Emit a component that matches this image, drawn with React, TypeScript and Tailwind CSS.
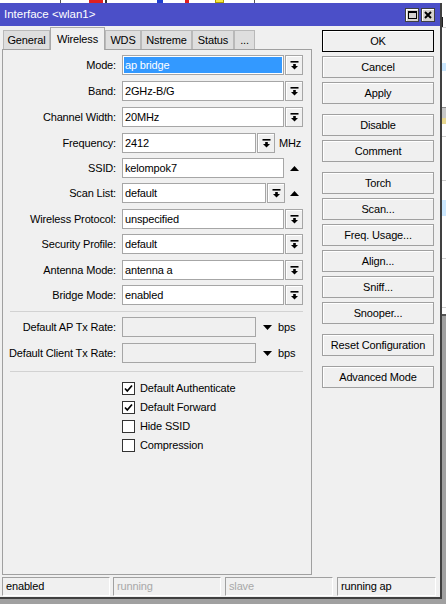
import type { ReactNode } from "react";

function DropGlyph() {
  return (
    <svg width="9" height="9" viewBox="0 0 9 9">
      <rect x="0.5" y="0" width="8" height="1.6" fill="#000" />
      <rect x="3.2" y="3" width="2.6" height="2" fill="#000" />
      <path d="M1 5 H8 L4.5 8.6 Z" fill="#000" />
    </svg>
  );
}

function DropButton() {
  return (
    <div className="ml-[1px] flex h-[20px] w-[18px] items-center justify-center border border-[#a6a6a6] bg-[#f0f0f0] shadow-[inset_1px_1px_0_#ffffff]">
      <DropGlyph />
    </div>
  );
}

function UpArrow({ className }: { className: string }) {
  return (
    <svg className={className} width="9" height="5" viewBox="0 0 9 5">
      <path d="M0 5 L4.5 0 L9 5 Z" fill="#000" />
    </svg>
  );
}

function DownArrow({ className }: { className: string }) {
  return (
    <svg className={className} width="9" height="5" viewBox="0 0 9 5">
      <path d="M0 0 L9 0 L4.5 5 Z" fill="#000" />
    </svg>
  );
}

function Field({
  width,
  value,
  selected,
  disabled,
}: {
  width: string;
  value?: string;
  selected?: boolean;
  disabled?: boolean;
}) {
  return (
    <div
      className={`${width} h-[20px] border border-[#a6a6a6] p-[1px] ${
        disabled ? "bg-[#f0f0f0]" : "bg-white"
      }`}
    >
      <div
        className={`h-full px-[1px] leading-[16px] ${
          selected ? "bg-[#3399ff] text-white" : "text-black"
        }`}
      >
        {value}
      </div>
    </div>
  );
}

function Row({
  label,
  className,
  children,
}: {
  label: string;
  className: string;
  children: ReactNode;
}) {
  return (
    <div className={`flex h-[20px] items-center ${className}`}>
      <div className="w-[113px] text-right">{label}:</div>
      <div className="ml-[6px] flex h-full items-center">{children}</div>
    </div>
  );
}

function Check({ label, checked }: { label: string; checked?: boolean }) {
  return (
    <div className="flex h-[19px] items-center pl-[119px]">
      <div className="flex h-[13px] w-[13px] items-center justify-center border border-[#333333] bg-white">
        {checked && (
          <svg width="11" height="11" viewBox="0 0 11 11">
            <path d="M2 5.5 L4.3 8 L9 2.5" fill="none" stroke="#000" strokeWidth="1.7" />
          </svg>
        )}
      </div>
      <span className="ml-[5px]">{label}</span>
    </div>
  );
}

function Btn({ label, className, primary }: { label: string; className: string; primary?: boolean }) {
  return (
    <div
      className={`flex h-[22px] w-[112px] items-center justify-center border bg-[#f0f0f0] shadow-[inset_1px_1px_0_#ffffff] ${
        primary ? "border-[#000000]" : "border-[#a0a0a0]"
      } ${className}`}
    >
      {label}
    </div>
  );
}

function Tab({ label, width, active }: { label: string; width: string; active?: boolean }) {
  return active ? (
    <div
      className={`relative -mb-px flex h-[23px] ${width} items-start justify-center border border-b-0 border-[#a9a9a9] bg-[#f0f0f0] pt-[3px]`}
    >
      {label}
    </div>
  ) : (
    <div
      className={`flex h-[19px] ${width} items-center justify-center border border-b-0 border-[#b9b9b9] bg-[#dedede]`}
    >
      {label}
    </div>
  );
}

function Status({ text, width, dim, className }: { text: string; width: string; dim?: boolean; className: string }) {
  return (
    <div
      className={`h-[19px] ${width} border border-t-[#a0a0a0] border-l-[#a0a0a0] border-r-white border-b-white pl-[3px] leading-[17px] ${
        dim ? "text-[#a8a8a8]" : "text-black"
      } ${className}`}
    >
      {text}
    </div>
  );
}

export default function App() {
  return (
    <div className="flex h-[604px] w-[446px] flex-col overflow-hidden bg-white font-['Liberation_Sans',Arial,sans-serif] text-[11px] tracking-[-0.15px] text-black">
      {/* sliver of the window behind */}
      <div className="flex h-[3px] items-start">
        <div className="ml-[60px] h-[3px] w-[1px] bg-[#555]" />
        <div className="ml-[28px] h-[3px] w-[14px] bg-[#e02020]" />
        <div className="ml-[2px] h-[3px] w-[2px] bg-[#333]" />
        <div className="ml-[50px] h-[3px] w-[6px] bg-[#2040d0]" />
        <div className="ml-[22px] h-[3px] w-[4px] bg-[#e02020]" />
        <div className="ml-[26px] h-[3px] w-[9px] border border-t-0 border-[#b0a000] bg-[#f5e642]" />
        <div className="ml-[30px] h-[3px] w-[1px] bg-[#555]" />
      </div>

      <div className="flex h-[596px]">
        {/* dialog window */}
        <div className="flex w-[442px] flex-col border-r-2 border-b-2 border-[#404040] bg-[#f0f0f0] pb-[1px]">
          {/* title bar */}
          <div className="flex h-[23px] items-center bg-[#4b4fc8] pl-[4px] pr-[5px]">
            <span className="text-[11.5px] tracking-normal text-white">Interface &lt;wlan1&gt;</span>
            <div className="ml-auto flex gap-[2px]">
              <div className="flex h-[14px] w-[14px] items-center justify-center border border-[#404040] bg-[#d6d3ce] shadow-[inset_1px_1px_0_#ffffff]">
                <div className="h-[8px] w-[9px] border border-t-2 border-black" />
              </div>
              <div className="flex h-[14px] w-[14px] items-center justify-center border border-[#404040] bg-[#d6d3ce] shadow-[inset_1px_1px_0_#ffffff]">
                <svg width="8" height="8" viewBox="0 0 8 8">
                  <path d="M1 1 L7 7 M7 1 L1 7" stroke="#000" strokeWidth="2" />
                </svg>
              </div>
            </div>
          </div>

          {/* body */}
          <div className="flex h-[549px]">
            <div className="flex flex-col pl-[2px]">
              <div className="ml-[1px] mt-[1px] flex h-[22px] items-end">
                <Tab label="General" width="w-[47px]" />
                <Tab label="Wireless" width="w-[55px]" active />
                <Tab label="WDS" width="w-[36px]" />
                <Tab label="Nstreme" width="w-[51px]" />
                <Tab label="Status" width="w-[42px]" />
                <Tab label="..." width="w-[21px]" />
              </div>

              <div className="flex h-[526px] w-[310px] flex-col border border-[#a0a0a0] pt-[5px]">
                <Row label="Mode" className="">
                  <Field width="w-[162px]" value="ap bridge" selected />
                  <DropButton />
                </Row>
                <Row label="Band" className="mt-[6px]">
                  <Field width="w-[162px]" value="2GHz-B/G" />
                  <DropButton />
                </Row>
                <Row label="Channel Width" className="mt-[6px]">
                  <Field width="w-[162px]" value="20MHz" />
                  <DropButton />
                </Row>
                <Row label="Frequency" className="mt-[6px]">
                  <Field width="w-[134px]" value="2412" />
                  <DropButton />
                  <span className="ml-[4px]">MHz</span>
                </Row>
                <Row label="SSID" className="mt-[5px]">
                  <Field width="w-[162px]" value="kelompok7" />
                  <UpArrow className="ml-[6px]" />
                </Row>
                <Row label="Scan List" className="mt-[5px]">
                  <Field width="w-[144px]" value="default" />
                  <DropButton />
                  <UpArrow className="ml-[5px]" />
                </Row>
                <Row label="Wireless Protocol" className="mt-[6px]">
                  <Field width="w-[162px]" value="unspecified" />
                  <DropButton />
                </Row>
                <Row label="Security Profile" className="mt-[5px]">
                  <Field width="w-[162px]" value="default" />
                  <DropButton />
                </Row>
                <Row label="Antenna Mode" className="mt-[6px]">
                  <Field width="w-[162px]" value="antenna a" />
                  <DropButton />
                </Row>
                <Row label="Bridge Mode" className="mt-[5px]">
                  <Field width="w-[162px]" value="enabled" />
                  <DropButton />
                </Row>

                <div className="ml-[7px] mt-[6px] w-[293px] border-t border-[#d2d2d2]" />

                <Row label="Default AP Tx Rate" className="mt-[5px]">
                  <Field width="w-[134px]" disabled />
                  <DownArrow className="ml-[7px]" />
                  <span className="ml-[6px]">bps</span>
                </Row>
                <Row label="Default Client Tx Rate" className="mt-[6px]">
                  <Field width="w-[134px]" disabled />
                  <DownArrow className="ml-[7px]" />
                  <span className="ml-[6px]">bps</span>
                </Row>

                <div className="ml-[7px] mt-[8px] w-[293px] border-t border-[#d2d2d2]" />

                <div className="mt-[7px] flex flex-col">
                  <Check label="Default Authenticate" checked />
                  <Check label="Default Forward" checked />
                  <Check label="Hide SSID" />
                  <Check label="Compression" />
                </div>
              </div>
            </div>

            <div className="ml-[10px] flex flex-col pt-[4px]">
              <Btn label="OK" className="" primary />
              <Btn label="Cancel" className="mt-[4px]" />
              <Btn label="Apply" className="mt-[4px]" />
              <Btn label="Disable" className="mt-[10px]" />
              <Btn label="Comment" className="mt-[4px]" />
              <Btn label="Torch" className="mt-[10px]" />
              <Btn label="Scan..." className="mt-[4px]" />
              <Btn label="Freq. Usage..." className="mt-[4px]" />
              <Btn label="Align..." className="mt-[4px]" />
              <Btn label="Sniff..." className="mt-[4px]" />
              <Btn label="Snooper..." className="mt-[4px]" />
              <Btn label="Reset Configuration" className="mt-[10px]" />
              <Btn label="Advanced Mode" className="mt-[10px]" />
            </div>
          </div>

          {/* status bar */}
          <div className="mt-[2px] flex pl-[2px]">
            <Status text="enabled" width="w-[108px]" className="" />
            <Status text="running" width="w-[108px]" dim className="ml-[3px]" />
            <Status text="slave" width="w-[108px]" dim className="ml-[4px]" />
            <Status text="running ap" width="w-[99px]" className="ml-[4px]" />
          </div>
        </div>

        {/* edge of the list behind the dialog */}
        <div className="flex w-[4px] flex-col">
          <div className="h-[14px] bg-white" />
          <div className="h-[10px] w-[1px] bg-[#222]" />
          <div className="h-[36px] border-t border-[#d0d0d0] bg-white" />
          <div className="h-[8px] bg-[#cce8ff]" />
          <div className="h-[36px] bg-white" />
          <div className="h-[11px] border-t border-[#888] bg-[#c8c8c8]" />
          <div className="h-[6px] bg-[#e8d890]" />
          <div className="h-[12px] bg-white" />
          <div className="h-[44px] border-t border-[#d0d0d0] bg-white" />
          <div className="h-[20px] border-t border-[#d0d0d0] bg-white" />
          <div className="h-[16px] bg-[#cce8ff]" />
          <div className="h-[42px] bg-white" />
          <div className="h-[49px] border-t border-[#d0d0d0] bg-white" />
          <div className="h-[7px] border-t border-[#d0d0d0] bg-white" />
          <div className="flex-1 border-t-2 border-[#555] bg-[#a0a0a0]" />
        </div>
      </div>

      <div className="flex-1 bg-[#a0a0a0]" />
    </div>
  );
}
